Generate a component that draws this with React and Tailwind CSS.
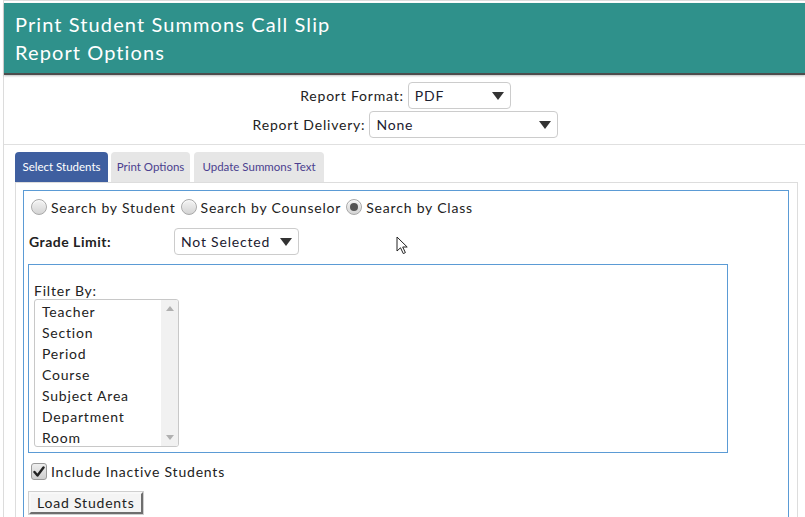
import React from 'react'

function Arrow() {
  return (
    <svg width="12" height="8" viewBox="0 0 12 8" className="shrink-0">
      <path d="M0 0 L12 0 L6 8 Z" fill="#333" />
    </svg>
  )
}

function Select({ value, width }) {
  return (
    <div className={`${width} h-[27px] inline-flex items-center justify-between border border-[#cccccc] rounded-[4px] bg-white pl-[6px] pr-[6px] text-[14px] text-[#1c2030] align-middle`}>
      <span>{value}</span>
      <Arrow />
    </div>
  )
}

function Radio({ checked, label }) {
  return (
    <label className="inline-flex items-center mr-[5px]">
      <span className="w-[16px] h-[16px] rounded-full border border-[#a9a9a9] bg-gradient-to-b from-[#f4f4f4] to-[#d4d4d4] flex items-center justify-center shadow-[inset_0_1px_1px_rgba(255,255,255,0.8)]">
        {checked && <span className="w-[8px] h-[8px] rounded-full bg-[#555]" />}
      </span>
      <span className="ml-[4px]">{label}</span>
    </label>
  )
}

function Cursor() {
  return (
    <svg width="14" height="20" viewBox="0 0 14 20" className="absolute left-[396px] top-[236px]">
      <path d="M1 1 L1 15 L4.5 11.8 L7.3 17.6 L9.4 16.6 L6.7 11 L11.2 11 Z" fill="#fff" stroke="#222" strokeWidth="1" strokeLinejoin="round" />
    </svg>
  )
}

const filters = ['Teacher', 'Section', 'Period', 'Course', 'Subject Area', 'Department', 'Room']

export default function App() {
  return (
    <div className="relative min-h-[517px] bg-white pl-[3px] font-['Lato',sans-serif] text-[#222] tracking-[0.8px] overflow-hidden">
      <div className="border-l border-t border-[#dcdcdc] min-h-[516px]">
        <div className="mt-[2px] bg-[#2f918b] border-b-2 border-[#4d4d4d] shadow-[0_1px_2px_rgba(0,0,0,0.25)] pl-[11px] pt-[7px] pb-[7px] text-white text-[20px] leading-[28px] tracking-[1.1px]">
          <div>Print Student Summons Call Slip</div>
          <div>Report Options</div>
        </div>

        <div className="border-b border-[#e0e0e0] pt-[7px] pb-[6px] flex flex-col items-center gap-[2px] text-[14px]">
          <div className="flex items-center gap-[4px] pl-[2px]">
            <span>Report Format:</span>
            <Select value="PDF" width="w-[103px]" />
          </div>
          <div className="flex items-center gap-[4px] pl-[2px]">
            <span>Report Delivery:</span>
            <Select value="None" width="w-[189px]" />
          </div>
        </div>

        <div className="pl-[11px] pr-[7px] pt-[7px]">
          <div className="flex items-end gap-[3px] text-[11.5px] tracking-[0px]">
            <div className="h-[30px] w-[93px] flex items-center justify-center rounded-t-[4px] bg-[#3f5fa0] text-white">Select Students</div>
            <div className="h-[30px] w-[79px] flex items-center justify-center rounded-t-[4px] bg-[#e6e6e6] text-[#4b3f8f]">Print Options</div>
            <div className="h-[30px] w-[130px] ml-[1px] flex items-center justify-center rounded-t-[4px] bg-[#e6e6e6] text-[#4b3f8f]">Update Summons Text</div>
          </div>
          <div className="border border-[#dddddd] border-b-0 pl-[7px] pr-[8px] pt-[7px] min-h-[340px]">
            <div className="border border-[#5b9bd5] border-b-0 pl-[7px] pt-[7px] pb-[6px] text-[14px] min-h-[330px]">
              <div className="flex items-center h-[18px]">
                <Radio label="Search by Student" />
                <Radio label="Search by Counselor" />
                <Radio checked label="Search by Class" />
              </div>
              <div className="flex items-center mt-[12px] -ml-[2px]">
                <span className="w-[145px] font-bold tracking-[0.5px]">Grade Limit:</span>
                <Select value="Not Selected" width="w-[125px]" />
              </div>
              <div className="mt-[9px] -ml-[3px] w-[700px] h-[189px] border border-[#5b9bd5] pl-[5px] pt-[17px]">
                <div className="leading-[17px]">Filter By:</div>
                <div className="w-[145px] h-[148px] border border-[#c8c8c8] rounded-[3px] flex overflow-hidden">
                  <div className="flex-1 pl-[7px] pt-[1px]">
                    {filters.map(f => (
                      <div key={f} className="h-[21px] leading-[21px]">{f}</div>
                    ))}
                  </div>
                  <div className="w-[17px] bg-[#f1f1f1] flex flex-col justify-between items-center py-[6px]">
                    <svg width="8" height="5" viewBox="0 0 8 5"><path d="M0 5 L8 5 L4 0 Z" fill="#b0b0b0" /></svg>
                    <svg width="8" height="5" viewBox="0 0 8 5"><path d="M0 0 L8 0 L4 5 Z" fill="#b0b0b0" /></svg>
                  </div>
                </div>
              </div>
              <div className="flex items-center mt-[8px]">
                <span className="w-[16px] h-[17px] rounded-[3px] border border-[#9a9a9a] bg-gradient-to-b from-[#eeeeee] to-[#cfcfcf] flex items-center justify-center">
                  <svg width="12" height="11" viewBox="0 0 12 11"><path d="M1.5 6 L4.5 9.5 L10.5 1.5" fill="none" stroke="#222" strokeWidth="2.4" strokeLinecap="round" strokeLinejoin="round" /></svg>
                </span>
                <span className="ml-[4px]">Include Inactive Students</span>
              </div>
              <div className="mt-[10px] -ml-[2px]">
                <button className="h-[22px] px-[6px] bg-[#f4f4f4] border-2 border-t-[#f8f8f8] border-l-[#f8f8f8] border-b-[#6e6e6e] border-r-[#6e6e6e] outline outline-1 outline-[#cfcfcf] text-[14px] leading-[16px] text-[#222]">Load Students</button>
              </div>
            </div>
          </div>
        </div>
      </div>
      <Cursor />
    </div>
  )
}
